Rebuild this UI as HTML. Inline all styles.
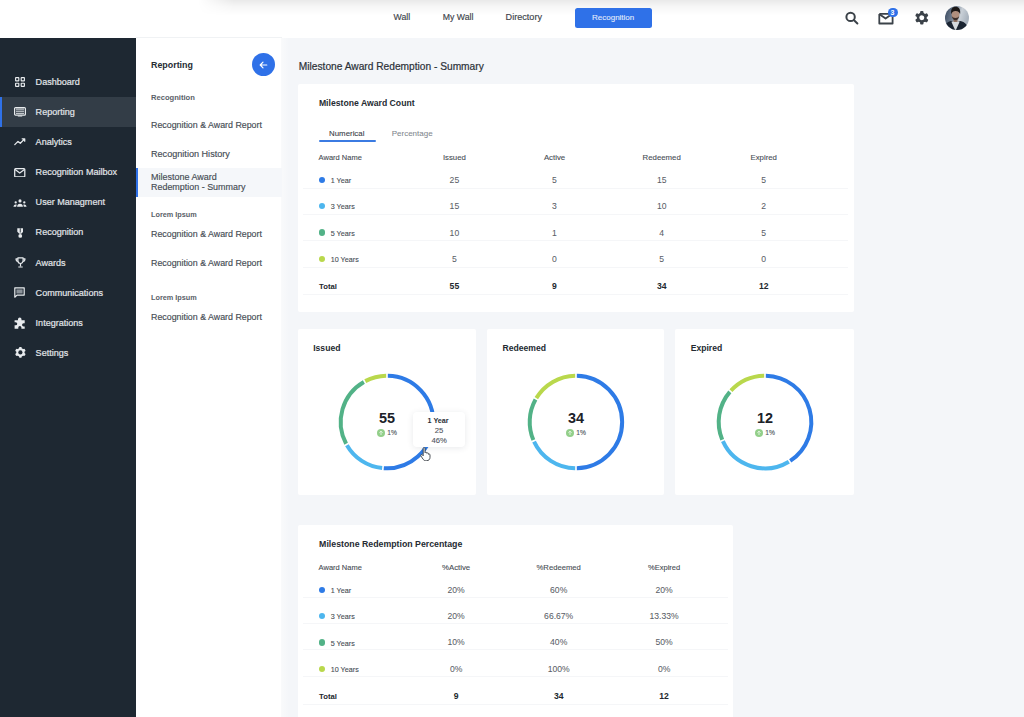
<!DOCTYPE html>
<html><head><meta charset="utf-8">
<style>
*{margin:0;padding:0;box-sizing:border-box}
html,body{width:1024px;height:717px;overflow:hidden;background:#f4f6f9;font-family:"Liberation Sans",sans-serif;color:#2c333b}
.abs{position:absolute}
.t{position:absolute;white-space:nowrap;line-height:1}
.card{position:absolute;background:#fff;border-radius:2px}
.dot{position:absolute;width:6.5px;height:6.5px;border-radius:50%}
.sep{position:absolute;height:1px;background:#f5f6f8}
</style></head><body>
<div class="abs" style="left:0;top:0;width:1024px;height:38px;background:#fff"></div>
<div class="abs" style="left:136px;top:37px;width:146px;height:1px;background:#f0f2f4"></div>
<div class="abs" style="left:198px;top:0;width:826px;height:16px;background:linear-gradient(rgba(0,0,0,.085),rgba(0,0,0,.03) 45%,rgba(0,0,0,0));-webkit-mask-image:linear-gradient(to right,transparent,#000 36px)"></div>
<div class="t" style="left:393.6px;top:13.24px;font-size:8.7px;color:#3d434a;-webkit-text-stroke:0.15px #3d434a;">Wall</div>
<div class="t" style="left:442.8px;top:13.24px;font-size:8.7px;color:#3d434a;-webkit-text-stroke:0.15px #3d434a;">My Wall</div>
<div class="t" style="left:505.6px;top:12.90px;font-size:9.1px;color:#3d434a;-webkit-text-stroke:0.15px #3d434a;">Directory</div>
<div class="abs" style="left:575px;top:8px;width:77px;height:20px;background:#2f71e8;border-radius:2.5px"></div>
<div class="t" style="left:592px;top:14.03px;font-size:8.0px;color:#e3ecfc;-webkit-text-stroke:0.1px #e3ecfc;">Recognition</div>
<svg class="abs" style="left:843px;top:9px" width="17" height="17" viewBox="0 0 17 17" fill="none" stroke="#3b4249" stroke-width="2" stroke-linecap="round"><circle cx="7.6" cy="7.9" r="4.2"/><path d="M10.8 11.1l3.6 3.4"/></svg>
<svg class="abs" style="left:877px;top:10.5px" width="18" height="14" viewBox="0 0 18 14" fill="none" stroke="#3b4249" stroke-width="1.8" stroke-linejoin="round"><path d="M2.3 2.9h10M2.3 2.9v9.6h13.3V5.8"/><path d="M2.8 3.4l5.8 4.2 4.6-3.3"/></svg>
<div class="abs" style="left:888px;top:7.5px;width:9.5px;height:9.5px;border-radius:50%;background:#2f71e8"></div>
<div class="t" style="left:890.6px;top:8.6px;font-size:7px;font-weight:bold;color:#fff">3</div>
<svg class="abs" style="left:914.1px;top:10.0px" width="15.6" height="15.6" viewBox="-7.8 -7.8 15.6 15.6"><g fill="#3b4249"><circle r="5.0"/><rect x="-1.7" y="-6.8" width="3.4" height="4" rx="1.02" transform="rotate(0)"/><rect x="-1.7" y="-6.8" width="3.4" height="4" rx="1.02" transform="rotate(60)"/><rect x="-1.7" y="-6.8" width="3.4" height="4" rx="1.02" transform="rotate(120)"/><rect x="-1.7" y="-6.8" width="3.4" height="4" rx="1.02" transform="rotate(180)"/><rect x="-1.7" y="-6.8" width="3.4" height="4" rx="1.02" transform="rotate(240)"/><rect x="-1.7" y="-6.8" width="3.4" height="4" rx="1.02" transform="rotate(300)"/></g><circle r="2.5" fill="#fff"/></svg>
<svg class="abs" style="left:945px;top:6px" width="24" height="24" viewBox="0 0 24 24">
<defs><clipPath id="av"><circle cx="12" cy="12" r="12"/></clipPath><linearGradient id="avg" x1="0" y1="0" x2="1" y2="0.3"><stop offset="0" stop-color="#34445a"/><stop offset=".4" stop-color="#6f7d8f"/><stop offset=".7" stop-color="#c9d0d7"/><stop offset="1" stop-color="#aab4bf"/></linearGradient></defs>
<g clip-path="url(#av)"><rect width="24" height="24" fill="url(#avg)"/>
<path d="M-1 25c0-5 2-9 6.5-10l5 1.5 5-1.5c4.5 1 8 4.5 8 10z" fill="#1b2532"/>
<path d="M6.5 16l4 9 4-9-4-1.5z" fill="#d5dade"/>
<rect x="8.5" y="11.5" width="4" height="4.5" fill="#8f7263"/>
<ellipse cx="10.5" cy="8.6" rx="3.9" ry="5.1" fill="#b08f7d"/>
<path d="M6.2 8.2C5.6 3 7.4 .8 10.6 .8s5.1 2.2 4.5 7.4c-.5-1.9-1.8-3.3-4.5-3.3S6.8 6.3 6.2 8.2z" fill="#1d1917"/>
<path d="M6.8 10c.6 2.9 1.9 4.3 3.7 4.3s3.1-1.4 3.7-4.3c-.6 1.3-1.8 1.9-3.7 1.9s-3.1-.6-3.7-1.9z" fill="#3b2f2a"/>
</g></svg>
<div class="abs" style="left:0;top:38px;width:136px;height:679px;background:#1e2832"></div>
<div class="abs" style="left:0;top:97px;width:136px;height:29.5px;background:#333d47"></div>
<div class="abs" style="left:0;top:97px;width:2px;height:29.5px;background:#2f71e8"></div>
<svg class="abs" style="left:14.8px;top:77.2px" width="10" height="10" viewBox="0 0 10 10" fill="none" stroke="#e8ebee" stroke-width="1.15"><rect x=".6" y=".6" width="3.2" height="3.2" rx=".4"/><rect x="6.2" y=".6" width="3.2" height="3.2" rx=".4"/><rect x=".6" y="6.2" width="3.2" height="3.2" rx=".4"/><rect x="6.2" y="6.2" width="3.2" height="3.2" rx=".4"/></svg>
<svg class="abs" style="left:14px;top:107px" width="12" height="10.5" viewBox="0 0 12 10.5" fill="none" stroke="#e8ebee" stroke-width="1.2"><rect x=".6" y=".6" width="10.8" height="7.6" rx="1"/><path d="M2 2.1h8M2 4.2h8M2 6.3h8" stroke-width="1"/><path d="M3.8 8.6h4.4v.9H3.8z" fill="#e8ebee" stroke="none"/></svg>
<svg class="abs" style="left:14px;top:138px" width="11.5" height="7.5" viewBox="0 0 11.5 7.5" fill="none" stroke="#e8ebee" stroke-width="1.3" stroke-linecap="round" stroke-linejoin="round"><path d="M.8 6.6l3.2-3.2 2.3 1.8 4.3-4.3M8.2 .8h2.5v2.4"/></svg>
<svg class="abs" style="left:14px;top:167.5px" width="11.5" height="9.5" viewBox="0 0 11.5 9.5" fill="none" stroke="#e8ebee" stroke-width="1.25"><rect x=".7" y=".7" width="10.1" height="8.1" rx=".9"/><path d="M1.1 1.5l4.65 3.5 4.65-3.5"/></svg>
<svg class="abs" style="left:13px;top:198.5px" width="14" height="8" viewBox="0 0 14 8" fill="#e8ebee"><circle cx="7" cy="1.9" r="1.55"/><circle cx="2.7" cy="3.4" r="1.15"/><circle cx="11.3" cy="3.4" r="1.15"/><path d="M4.1 7.7c0-1.8 1.2-3 2.9-3s2.9 1.2 2.9 3z"/><path d="M.5 7.7c0-1.3.8-2.3 2.1-2.3.5 0 .9.1 1.2.3-.4.5-.6 1.2-.6 2z"/><path d="M13.5 7.7c0-1.3-.8-2.3-2.1-2.3-.5 0-.9.1-1.2.3.4.5.6 1.2.6 2z"/></svg>
<svg class="abs" style="left:16.5px;top:227.5px" width="6.5" height="10" viewBox="0 0 6.5 10" fill="#e8ebee"><path d="M.3.3h5.9v3.5L4.2 5.8H2.3L.3 3.8z"/><path d="M3.25 .3v4.2" stroke="#1e2832" stroke-width=".9"/><circle cx="3.25" cy="7.9" r="1.9"/></svg>
<svg class="abs" style="left:14.5px;top:257px" width="11" height="11" viewBox="0 0 11 11" fill="none" stroke="#e8ebee" stroke-width="1.2" stroke-linejoin="round"><path d="M2.9.8h5.2v2.8c0 1.6-1.1 2.9-2.6 2.9S2.9 5.2 2.9 3.6z"/><path d="M2.9 1.8H1c0 1.6.7 2.5 1.9 2.6M8.1 1.8H10c0 1.6-.7 2.5-1.9 2.6M5.5 6.6v2.6M3.3 10h4.4"/></svg>
<svg class="abs" style="left:14px;top:287px" width="11" height="11" viewBox="0 0 11 11" fill="none" stroke="#e8ebee" stroke-width="1.2" stroke-linejoin="round"><path d="M.8.8h9.4v7.3H3L.8 10.2z"/><rect x="2.4" y="2.4" width="6.2" height="4.1" fill="#8b9299" stroke="none"/></svg>
<svg class="abs" style="left:13.5px;top:317px" width="12.5" height="12" viewBox="0 0 12.5 12" fill="#e8ebee"><path d="M4 2.2a1.75 1.75 0 0 1 3.5 0V3.3h3.2v3H9.6a1.55 1.55 0 0 0 0 3.1h1.1V11.7H7.4v-1.1a1.55 1.55 0 0 0-3.1 0v1.1H.6V8.3h1.1a1.55 1.55 0 0 0 0-3.1H.6V3.3H4z"/></svg>
<svg class="abs" style="left:13.499999999999998px;top:346.40000000000003px" width="12.8" height="12.8" viewBox="-6.4 -6.4 12.8 12.8"><g fill="#e8ebee"><circle r="4.1"/><rect x="-1.35" y="-5.4" width="2.7" height="3.0" rx="0.81" transform="rotate(0)"/><rect x="-1.35" y="-5.4" width="2.7" height="3.0" rx="0.81" transform="rotate(60)"/><rect x="-1.35" y="-5.4" width="2.7" height="3.0" rx="0.81" transform="rotate(120)"/><rect x="-1.35" y="-5.4" width="2.7" height="3.0" rx="0.81" transform="rotate(180)"/><rect x="-1.35" y="-5.4" width="2.7" height="3.0" rx="0.81" transform="rotate(240)"/><rect x="-1.35" y="-5.4" width="2.7" height="3.0" rx="0.81" transform="rotate(300)"/></g><circle r="2.1" fill="#1e2832"/></svg>
<div class="t" style="left:35.6px;top:77.94px;font-size:9.05px;color:#e2e5e9;-webkit-text-stroke:0.2px #e2e5e9;">Dashboard</div>
<div class="t" style="left:35.6px;top:108.04px;font-size:9.05px;color:#e2e5e9;-webkit-text-stroke:0.2px #e2e5e9;">Reporting</div>
<div class="t" style="left:35.6px;top:138.14px;font-size:9.05px;color:#e2e5e9;-webkit-text-stroke:0.2px #e2e5e9;">Analytics</div>
<div class="t" style="left:35.6px;top:168.24px;font-size:9.05px;color:#e2e5e9;-webkit-text-stroke:0.2px #e2e5e9;">Recognition Mailbox</div>
<div class="t" style="left:35.6px;top:198.34px;font-size:9.05px;color:#e2e5e9;-webkit-text-stroke:0.2px #e2e5e9;">User Managment</div>
<div class="t" style="left:35.6px;top:228.44px;font-size:9.05px;color:#e2e5e9;-webkit-text-stroke:0.2px #e2e5e9;">Recognition</div>
<div class="t" style="left:35.6px;top:258.54px;font-size:9.05px;color:#e2e5e9;-webkit-text-stroke:0.2px #e2e5e9;">Awards</div>
<div class="t" style="left:35.6px;top:288.64px;font-size:9.05px;color:#e2e5e9;-webkit-text-stroke:0.2px #e2e5e9;">Communications</div>
<div class="t" style="left:35.6px;top:318.74px;font-size:9.05px;color:#e2e5e9;-webkit-text-stroke:0.2px #e2e5e9;">Integrations</div>
<div class="t" style="left:35.6px;top:348.84px;font-size:9.05px;color:#e2e5e9;-webkit-text-stroke:0.2px #e2e5e9;">Settings</div>
<div class="abs" style="left:281px;top:38px;width:8px;height:679px;background:linear-gradient(to right,#f9fafb,#f4f6f9)"></div>
<div class="abs" style="left:136px;top:38px;width:145px;height:679px;background:#fff"></div>
<div class="t" style="left:151px;top:60.87px;font-size:8.9px;color:#262c33;font-weight:bold;">Reporting</div>
<div class="abs" style="left:251.8px;top:53.2px;width:22.8px;height:22.8px;border-radius:50%;background:#2f71e8"></div>
<svg class="abs" style="left:258px;top:59.6px" width="11" height="10" viewBox="0 0 11 10" fill="none" stroke="#fff" stroke-width="1.2" stroke-linecap="round" stroke-linejoin="round"><path d="M8.8 5H2.3M5 2.2L2.2 5 5 7.8"/></svg>
<div class="t" style="left:151px;top:93.87px;font-size:7.6px;color:#5a6169;font-weight:bold;">Recognition</div>
<div class="t" style="left:151px;top:120.91px;font-size:8.85px;color:#454c54;-webkit-text-stroke:0.15px #454c54;">Recognition &amp; Award Report</div>
<div class="t" style="left:151px;top:149.90px;font-size:9.1px;color:#454c54;-webkit-text-stroke:0.15px #454c54;">Recognition History</div>
<div class="abs" style="left:136px;top:168px;width:146px;height:28.5px;background:#f5f7fa"></div>
<div class="abs" style="left:136px;top:168px;width:2px;height:28.5px;background:#2f71e8"></div>
<div class="t" style="left:151px;top:172.98px;font-size:9.0px;color:#454c54;-webkit-text-stroke:0.15px #454c54;">Milestone Award</div>
<div class="t" style="left:151px;top:183.22px;font-size:8.95px;color:#454c54;-webkit-text-stroke:0.15px #454c54;">Redemption - Summary</div>
<div class="t" style="left:151px;top:211.02px;font-size:7.3px;color:#5a6169;font-weight:bold;">Lorem Ipsum</div>
<div class="t" style="left:151px;top:230.21px;font-size:8.85px;color:#454c54;-webkit-text-stroke:0.15px #454c54;">Recognition &amp; Award Report</div>
<div class="t" style="left:151px;top:259.21px;font-size:8.85px;color:#454c54;-webkit-text-stroke:0.15px #454c54;">Recognition &amp; Award Report</div>
<div class="t" style="left:151px;top:293.92px;font-size:7.3px;color:#5a6169;font-weight:bold;">Lorem Ipsum</div>
<div class="t" style="left:151px;top:312.51px;font-size:8.85px;color:#454c54;-webkit-text-stroke:0.15px #454c54;">Recognition &amp; Award Report</div>
<div class="t" style="left:298.8px;top:62.37px;font-size:10.2px;color:#2b3138;-webkit-text-stroke:0.2px #2b3138;">Milestone Award Redemption - Summary</div>
<div class="card" style="left:297.5px;top:84.3px;width:556px;height:227.5px"></div>
<div class="t" style="left:318.9px;top:98.87px;font-size:8.66px;color:#252b32;font-weight:bold;">Milestone Award Count</div>
<div class="t" style="left:329.1px;top:129.95px;font-size:7.85px;color:#3b4148;-webkit-text-stroke:0.1px #3b4148;">Numerical</div>
<div class="t" style="left:391.7px;top:129.83px;font-size:8.0px;color:#80868d;-webkit-text-stroke:0.05px #80868d;">Percentage</div>
<div class="abs" style="left:318.6px;top:139.8px;width:57px;height:1.8px;background:#3b7be2;border-radius:1px"></div>
<div class="t" style="left:318.6px;top:154.35px;font-size:7.5px;color:#464c53;-webkit-text-stroke:0.1px #464c53;">Award Name</div>
<div class="t" style="left:454.4px;top:154.10px;font-size:7.8px;color:#464c53;transform:translateX(-50%);-webkit-text-stroke:0.1px #464c53;">Issued</div>
<div class="t" style="left:554.5px;top:154.10px;font-size:7.8px;color:#464c53;transform:translateX(-50%);-webkit-text-stroke:0.1px #464c53;">Active</div>
<div class="t" style="left:661.7px;top:154.10px;font-size:7.8px;color:#464c53;transform:translateX(-50%);-webkit-text-stroke:0.1px #464c53;">Redeemed</div>
<div class="t" style="left:763.7px;top:154.10px;font-size:7.8px;color:#464c53;transform:translateX(-50%);-webkit-text-stroke:0.1px #464c53;">Expired</div>
<div class="sep" style="left:303px;top:188.3px;width:545px"></div>
<div class="sep" style="left:303px;top:213.7px;width:545px"></div>
<div class="sep" style="left:303px;top:240px;width:545px"></div>
<div class="sep" style="left:303px;top:267px;width:545px"></div>
<div class="sep" style="left:303px;top:294.2px;width:545px"></div>
<div class="dot" style="left:318.8px;top:176.9px;background:#2e7be6"></div>
<div class="t" style="left:330.75px;top:177.41px;font-size:7.2px;color:#464c53;-webkit-text-stroke:0.1px #464c53;">1 Year</div>
<div class="t" style="left:454.4px;top:176.22px;font-size:8.6px;color:#5a6067;transform:translateX(-50%);-webkit-text-stroke:0.05px #5a6067;">25</div>
<div class="t" style="left:554.5px;top:176.22px;font-size:8.6px;color:#5a6067;transform:translateX(-50%);-webkit-text-stroke:0.05px #5a6067;">5</div>
<div class="t" style="left:661.7px;top:176.22px;font-size:8.6px;color:#5a6067;transform:translateX(-50%);-webkit-text-stroke:0.05px #5a6067;">15</div>
<div class="t" style="left:763.7px;top:176.22px;font-size:8.6px;color:#5a6067;transform:translateX(-50%);-webkit-text-stroke:0.05px #5a6067;">5</div>
<div class="dot" style="left:318.8px;top:202.9px;background:#4db6ee"></div>
<div class="t" style="left:330.75px;top:203.41px;font-size:7.2px;color:#464c53;-webkit-text-stroke:0.1px #464c53;">3 Years</div>
<div class="t" style="left:454.4px;top:202.22px;font-size:8.6px;color:#5a6067;transform:translateX(-50%);-webkit-text-stroke:0.05px #5a6067;">15</div>
<div class="t" style="left:554.5px;top:202.22px;font-size:8.6px;color:#5a6067;transform:translateX(-50%);-webkit-text-stroke:0.05px #5a6067;">3</div>
<div class="t" style="left:661.7px;top:202.22px;font-size:8.6px;color:#5a6067;transform:translateX(-50%);-webkit-text-stroke:0.05px #5a6067;">10</div>
<div class="t" style="left:763.7px;top:202.22px;font-size:8.6px;color:#5a6067;transform:translateX(-50%);-webkit-text-stroke:0.05px #5a6067;">2</div>
<div class="dot" style="left:318.8px;top:229.4px;background:#52b287"></div>
<div class="t" style="left:330.75px;top:229.91px;font-size:7.2px;color:#464c53;-webkit-text-stroke:0.1px #464c53;">5 Years</div>
<div class="t" style="left:454.4px;top:228.72px;font-size:8.6px;color:#5a6067;transform:translateX(-50%);-webkit-text-stroke:0.05px #5a6067;">10</div>
<div class="t" style="left:554.5px;top:228.72px;font-size:8.6px;color:#5a6067;transform:translateX(-50%);-webkit-text-stroke:0.05px #5a6067;">1</div>
<div class="t" style="left:661.7px;top:228.72px;font-size:8.6px;color:#5a6067;transform:translateX(-50%);-webkit-text-stroke:0.05px #5a6067;">4</div>
<div class="t" style="left:763.7px;top:228.72px;font-size:8.6px;color:#5a6067;transform:translateX(-50%);-webkit-text-stroke:0.05px #5a6067;">5</div>
<div class="dot" style="left:318.8px;top:255.9px;background:#b9d84c"></div>
<div class="t" style="left:330.75px;top:256.41px;font-size:7.2px;color:#464c53;-webkit-text-stroke:0.1px #464c53;">10 Years</div>
<div class="t" style="left:454.4px;top:255.22px;font-size:8.6px;color:#5a6067;transform:translateX(-50%);-webkit-text-stroke:0.05px #5a6067;">5</div>
<div class="t" style="left:554.5px;top:255.22px;font-size:8.6px;color:#5a6067;transform:translateX(-50%);-webkit-text-stroke:0.05px #5a6067;">0</div>
<div class="t" style="left:661.7px;top:255.22px;font-size:8.6px;color:#5a6067;transform:translateX(-50%);-webkit-text-stroke:0.05px #5a6067;">5</div>
<div class="t" style="left:763.7px;top:255.22px;font-size:8.6px;color:#5a6067;transform:translateX(-50%);-webkit-text-stroke:0.05px #5a6067;">0</div>
<div class="t" style="left:319.1px;top:282.98px;font-size:7.7px;color:#22282e;font-weight:bold;">Total</div>
<div class="t" style="left:454.4px;top:282.22px;font-size:8.6px;color:#22282e;font-weight:bold;transform:translateX(-50%);">55</div>
<div class="t" style="left:554.5px;top:282.22px;font-size:8.6px;color:#22282e;font-weight:bold;transform:translateX(-50%);">9</div>
<div class="t" style="left:661.7px;top:282.22px;font-size:8.6px;color:#22282e;font-weight:bold;transform:translateX(-50%);">34</div>
<div class="t" style="left:763.7px;top:282.22px;font-size:8.6px;color:#22282e;font-weight:bold;transform:translateX(-50%);">12</div>
<div class="card" style="left:297.5px;top:329.3px;width:178.5px;height:165.5px"></div>
<div class="t" style="left:313.2px;top:343.52px;font-size:8.6px;color:#232a31;font-weight:bold;">Issued</div>
<svg class="abs" style="left:334.6px;top:370px" width="104" height="104" viewBox="334.6 370 104 104" fill="none" stroke-width="4.0"><path d="M387.41 375.71A46.3 46.3 0 1 1 383.37 468.19" stroke="#2e7be6"/><path d="M381.76 468.05A46.3 46.3 0 0 1 346.50 445.15" stroke="#4db6ee"/><path d="M345.72 443.74A46.3 46.3 0 0 1 363.45 381.90" stroke="#52b287"/><path d="M364.86 381.12A46.3 46.3 0 0 1 385.79 375.71" stroke="#b9d84c"/></svg>
<div class="t" style="left:387.0px;top:410.81px;font-size:14.4px;color:#1c2229;font-weight:bold;transform:translateX(-50%);">55</div>
<div class="abs" style="left:377.1px;top:428.8px;width:8px;height:8px;border-radius:50%;background:#93cf8a"></div>
<svg class="abs" style="left:377.1px;top:428.8px" width="8" height="8" viewBox="0 0 8 8" fill="none" stroke="#e9f6e6" stroke-width=".9"><path d="M4 6V2.2M2.4 3.7L4 2.1l1.6 1.6"/></svg>
<div class="t" style="left:387.20000000000005px;top:429.93px;font-size:6.7px;color:#50565d;-webkit-text-stroke:0.12px #50565d;">1%</div>
<div class="card" style="left:486.8px;top:329.3px;width:177.5px;height:165.5px"></div>
<div class="t" style="left:502.5px;top:343.52px;font-size:8.6px;color:#232a31;font-weight:bold;">Redeemed</div>
<svg class="abs" style="left:523.7px;top:370px" width="104" height="104" viewBox="523.7 370 104 104" fill="none" stroke-width="4.0"><path d="M576.51 375.71A46.3 46.3 0 0 1 576.51 468.29" stroke="#2e7be6"/><path d="M574.89 468.29A46.3 46.3 0 0 1 533.74 441.57" stroke="#4db6ee"/><path d="M533.08 440.09A46.3 46.3 0 0 1 535.21 399.55" stroke="#52b287"/><path d="M536.01 398.15A46.3 46.3 0 0 1 574.89 375.71" stroke="#b9d84c"/></svg>
<div class="t" style="left:576.1px;top:410.81px;font-size:14.4px;color:#1c2229;font-weight:bold;transform:translateX(-50%);">34</div>
<div class="abs" style="left:566.2px;top:428.8px;width:8px;height:8px;border-radius:50%;background:#93cf8a"></div>
<svg class="abs" style="left:566.2px;top:428.8px" width="8" height="8" viewBox="0 0 8 8" fill="none" stroke="#e9f6e6" stroke-width=".9"><path d="M4 6V2.2M2.4 3.7L4 2.1l1.6 1.6"/></svg>
<div class="t" style="left:576.3000000000001px;top:429.93px;font-size:6.7px;color:#50565d;-webkit-text-stroke:0.12px #50565d;">1%</div>
<div class="card" style="left:675px;top:329.3px;width:178.5px;height:165.5px"></div>
<div class="t" style="left:690.7px;top:343.52px;font-size:8.6px;color:#232a31;font-weight:bold;">Expired</div>
<svg class="abs" style="left:712.7px;top:370px" width="104" height="104" viewBox="712.7 370 104 104" fill="none" stroke-width="4.0"><path d="M765.51 375.71A46.3 46.3 0 0 1 789.92 460.83" stroke="#2e7be6"/><path d="M788.55 461.69A46.3 46.3 0 0 1 722.57 441.20" stroke="#4db6ee"/><path d="M721.92 439.72A46.3 46.3 0 0 1 729.55 391.87" stroke="#52b287"/><path d="M730.62 390.66A46.3 46.3 0 0 1 763.89 375.71" stroke="#b9d84c"/></svg>
<div class="t" style="left:765.1px;top:410.81px;font-size:14.4px;color:#1c2229;font-weight:bold;transform:translateX(-50%);">12</div>
<div class="abs" style="left:755.2px;top:428.8px;width:8px;height:8px;border-radius:50%;background:#93cf8a"></div>
<svg class="abs" style="left:755.2px;top:428.8px" width="8" height="8" viewBox="0 0 8 8" fill="none" stroke="#e9f6e6" stroke-width=".9"><path d="M4 6V2.2M2.4 3.7L4 2.1l1.6 1.6"/></svg>
<div class="t" style="left:765.3000000000001px;top:429.93px;font-size:6.7px;color:#50565d;-webkit-text-stroke:0.12px #50565d;">1%</div>
<div class="abs" style="left:412.6px;top:411.8px;width:52px;height:35.5px;background:#fff;border-radius:4px;box-shadow:0 1px 6px rgba(30,40,60,.10)"></div>
<div class="t" style="left:438.1px;top:416.51px;font-size:7.2px;color:#2a3038;font-weight:bold;transform:translateX(-50%);">1 Year</div>
<div class="t" style="left:439.0px;top:427.08px;font-size:7.7px;color:#50565d;transform:translateX(-50%);-webkit-text-stroke:0.1px #50565d;">25</div>
<div class="t" style="left:439.1px;top:436.68px;font-size:7.7px;color:#50565d;transform:translateX(-50%);-webkit-text-stroke:0.1px #50565d;">46%</div>
<svg class="abs" style="left:420px;top:447px" width="11" height="14" viewBox="0 0 11 14"><path d="M3.2 1.6c0-.6.4-1 .9-1s.9.4.9 1v4.2c.2-.4.5-.6.9-.6.5 0 .9.4.9.9v.3c.2-.3.5-.5.9-.5.5 0 .8.4.8.9v.5c.2-.2.4-.3.7-.3.5 0 .8.4.8.9v2.6c0 1.9-1.4 3.2-3.3 3.2H5.6c-1 0-1.8-.5-2.4-1.3L.9 8.9c-.3-.4-.2-1 .2-1.2.4-.3.9-.2 1.2.1l.9 1z" fill="#fff" stroke="#3a3f45" stroke-width=".9"/></svg>
<div class="card" style="left:297.5px;top:525px;width:435.5px;height:200px"></div>
<div class="t" style="left:319.1px;top:539.98px;font-size:8.77px;color:#252b32;font-weight:bold;">Milestone Redemption Percentage</div>
<div class="t" style="left:318.6px;top:564.35px;font-size:7.5px;color:#464c53;-webkit-text-stroke:0.1px #464c53;">Award Name</div>
<div class="t" style="left:456.1px;top:563.90px;font-size:7.8px;color:#464c53;transform:translateX(-50%);-webkit-text-stroke:0.1px #464c53;">%Active</div>
<div class="t" style="left:558.7px;top:564.02px;font-size:7.66px;color:#464c53;transform:translateX(-50%);-webkit-text-stroke:0.1px #464c53;">%Redeemed</div>
<div class="t" style="left:664.1px;top:564.11px;font-size:7.55px;color:#464c53;transform:translateX(-50%);-webkit-text-stroke:0.1px #464c53;">%Expired</div>
<div class="sep" style="left:303px;top:596.8px;width:425px"></div>
<div class="sep" style="left:303px;top:622.8px;width:425px"></div>
<div class="sep" style="left:303px;top:649.4px;width:425px"></div>
<div class="sep" style="left:303px;top:675.8px;width:425px"></div>
<div class="sep" style="left:303px;top:703.6px;width:425px"></div>
<div class="dot" style="left:318.8px;top:586.5px;background:#2e7be6"></div>
<div class="t" style="left:330.75px;top:587.01px;font-size:7.2px;color:#464c53;-webkit-text-stroke:0.1px #464c53;">1 Year</div>
<div class="t" style="left:456.1px;top:585.82px;font-size:8.6px;color:#5a6067;transform:translateX(-50%);-webkit-text-stroke:0.05px #5a6067;">20%</div>
<div class="t" style="left:558.7px;top:585.82px;font-size:8.6px;color:#5a6067;transform:translateX(-50%);-webkit-text-stroke:0.05px #5a6067;">60%</div>
<div class="t" style="left:664.1px;top:585.82px;font-size:8.6px;color:#5a6067;transform:translateX(-50%);-webkit-text-stroke:0.05px #5a6067;">20%</div>
<div class="dot" style="left:318.8px;top:612.8px;background:#4db6ee"></div>
<div class="t" style="left:330.75px;top:613.31px;font-size:7.2px;color:#464c53;-webkit-text-stroke:0.1px #464c53;">3 Years</div>
<div class="t" style="left:456.1px;top:612.12px;font-size:8.6px;color:#5a6067;transform:translateX(-50%);-webkit-text-stroke:0.05px #5a6067;">20%</div>
<div class="t" style="left:558.7px;top:612.12px;font-size:8.6px;color:#5a6067;transform:translateX(-50%);-webkit-text-stroke:0.05px #5a6067;">66.67%</div>
<div class="t" style="left:664.1px;top:612.12px;font-size:8.6px;color:#5a6067;transform:translateX(-50%);-webkit-text-stroke:0.05px #5a6067;">13.33%</div>
<div class="dot" style="left:318.8px;top:639.0px;background:#52b287"></div>
<div class="t" style="left:330.75px;top:639.51px;font-size:7.2px;color:#464c53;-webkit-text-stroke:0.1px #464c53;">5 Years</div>
<div class="t" style="left:456.1px;top:638.32px;font-size:8.6px;color:#5a6067;transform:translateX(-50%);-webkit-text-stroke:0.05px #5a6067;">10%</div>
<div class="t" style="left:558.7px;top:638.32px;font-size:8.6px;color:#5a6067;transform:translateX(-50%);-webkit-text-stroke:0.05px #5a6067;">40%</div>
<div class="t" style="left:664.1px;top:638.32px;font-size:8.6px;color:#5a6067;transform:translateX(-50%);-webkit-text-stroke:0.05px #5a6067;">50%</div>
<div class="dot" style="left:318.8px;top:665.6px;background:#b9d84c"></div>
<div class="t" style="left:330.75px;top:666.11px;font-size:7.2px;color:#464c53;-webkit-text-stroke:0.1px #464c53;">10 Years</div>
<div class="t" style="left:456.1px;top:664.92px;font-size:8.6px;color:#5a6067;transform:translateX(-50%);-webkit-text-stroke:0.05px #5a6067;">0%</div>
<div class="t" style="left:558.7px;top:664.92px;font-size:8.6px;color:#5a6067;transform:translateX(-50%);-webkit-text-stroke:0.05px #5a6067;">100%</div>
<div class="t" style="left:664.1px;top:664.92px;font-size:8.6px;color:#5a6067;transform:translateX(-50%);-webkit-text-stroke:0.05px #5a6067;">0%</div>
<div class="t" style="left:319.1px;top:693.08px;font-size:7.7px;color:#22282e;font-weight:bold;">Total</div>
<div class="t" style="left:456.1px;top:692.32px;font-size:8.6px;color:#22282e;font-weight:bold;transform:translateX(-50%);">9</div>
<div class="t" style="left:558.7px;top:692.32px;font-size:8.6px;color:#22282e;font-weight:bold;transform:translateX(-50%);">34</div>
<div class="t" style="left:664.1px;top:692.32px;font-size:8.6px;color:#22282e;font-weight:bold;transform:translateX(-50%);">12</div>
</body></html>
